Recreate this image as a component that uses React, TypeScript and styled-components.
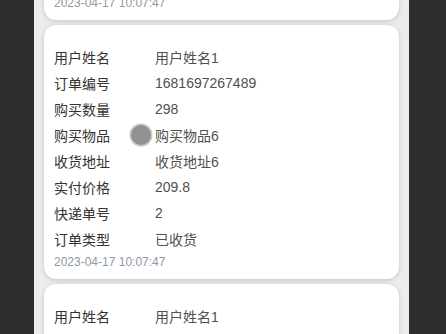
import React, { useLayoutEffect, useRef } from 'react';
import styled, { createGlobalStyle } from 'styled-components';

const GlobalStyle = createGlobalStyle`
    html, body {
        margin: 0;
        padding: 0;
        height: 100%;
        background: #2d2d2d;
        font-family: "Liberation Sans", Arial, "Noto Sans CJK SC", sans-serif;
    }
    #root {
        height: 100%;
    }
`;

interface Order {
    user: string;
    orderNo: string;
    count: number;
    goods: string;
    address: string;
    price: string;
    express: string;
    status: string;
    time: string;
}

const orders: Order[] = [5, 6, 7].map((n) => ({
    user: '用户姓名1',
    orderNo: '1681697267489',
    count: 298,
    goods: '购买物品' + n,
    address: '收货地址' + n,
    price: '209.8',
    express: '2',
    status: '已收货',
    time: '2023-04-17 10:07:47',
}));

export default function App() {
    const listRef = useRef<HTMLDivElement>(null);

    // the list is shown scrolled down a little, as in the capture
    useLayoutEffect(() => {
        if (listRef.current) listRef.current.scrollTop = 240;
    }, []);

    return (
        <>
            <GlobalStyle />
            <Page>
                <Column ref={listRef}>
                    {orders.map((o, i) => (
                        <Card key={i}>
                            <Row label="用户姓名" value={o.user} />
                            <Row label="订单编号" value={o.orderNo} />
                            <Row label="购买数量" value={String(o.count)} />
                            <Row label="购买物品" value={o.goods} />
                            <Row label="收货地址" value={o.address} />
                            <Row label="实付价格" value={o.price} />
                            <Row label="快递单号" value={o.express} />
                            <Row label="订单类型" value={o.status} />
                            <Time>{o.time}</Time>
                        </Card>
                    ))}
                </Column>
                <TouchDot />
            </Page>
        </>
    );
}

const Row: React.FC<{ label: string; value: string }> = ({ label, value }) => (
    <Line>
        <Label>{label}</Label>
        <Value>{value}</Value>
    </Line>
);

const Page = styled.div`
    position: relative;
    height: 100%;
    display: flex;
    padding-left: 34px;
`;

const Column = styled.div`
    width: 375px;
    height: 100%;
    background: #ececec;
    overflow-y: auto;
    box-sizing: border-box;
    padding: 6px 10px;
    display: flex;
    flex-direction: column;
    gap: 5px;
    scrollbar-width: none;
    &::-webkit-scrollbar {
        display: none;
    }
`;

const Card = styled.div`
    flex-shrink: 0;
    background: #fff;
    border-radius: 12px;
    box-shadow: 0 1px 4px rgba(0, 0, 0, 0.18);
    padding: 19px 10px 7px;
    display: flex;
    flex-direction: column;
`;

const Line = styled.div`
    display: flex;
    align-items: center;
    height: 26px;
    font-size: 14px;
`;

const Label = styled.span`
    width: 101px;
    flex-shrink: 0;
    color: #333;
`;

const Value = styled.span`
    color: #505050;
`;

const Time = styled.div`
    height: 20px;
    line-height: 20px;
    font-size: 12px;
    color: #8d99a6;
`;

const TouchDot = styled.div`
    position: absolute;
    left: 131px;
    top: 125px;
    width: 20px;
    height: 20px;
    border-radius: 50%;
    background: #919191;
    box-shadow: 0 0 0 1.5px #c9c9c9;
`;
